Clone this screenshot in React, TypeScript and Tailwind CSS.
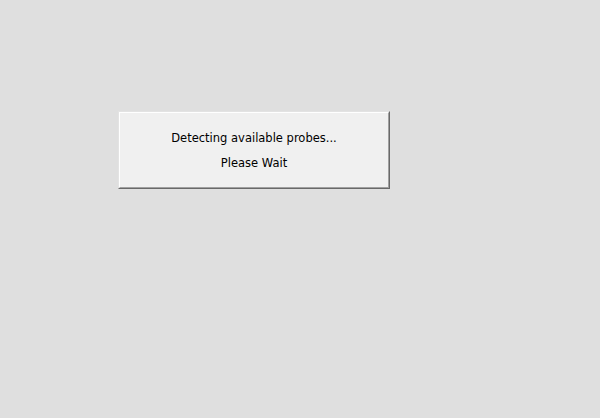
export default function App() {
  return (
    <div className="w-[600px] h-[418px] bg-[#dfdfdf] pt-[111px] pl-[118px]" style={{ fontFamily: '"DejaVu Sans", sans-serif' }}>
      <div className="w-[272px] h-[78px] border-t border-l border-t-[#e3e3e3] border-l-[#e3e3e3] border-r border-b border-r-[#696969] border-b-[#696969]">
        <div className="h-full w-full bg-[#f0f0f0] border-t border-l border-t-white border-l-white border-r border-b border-r-[#a0a0a0] border-b-[#a0a0a0] flex flex-col items-center pt-[18px] gap-[11px] text-[11.5px] leading-[14px] text-black">
          <div>Detecting available probes...</div>
          <div>Please Wait</div>
        </div>
      </div>
    </div>
  );
}
